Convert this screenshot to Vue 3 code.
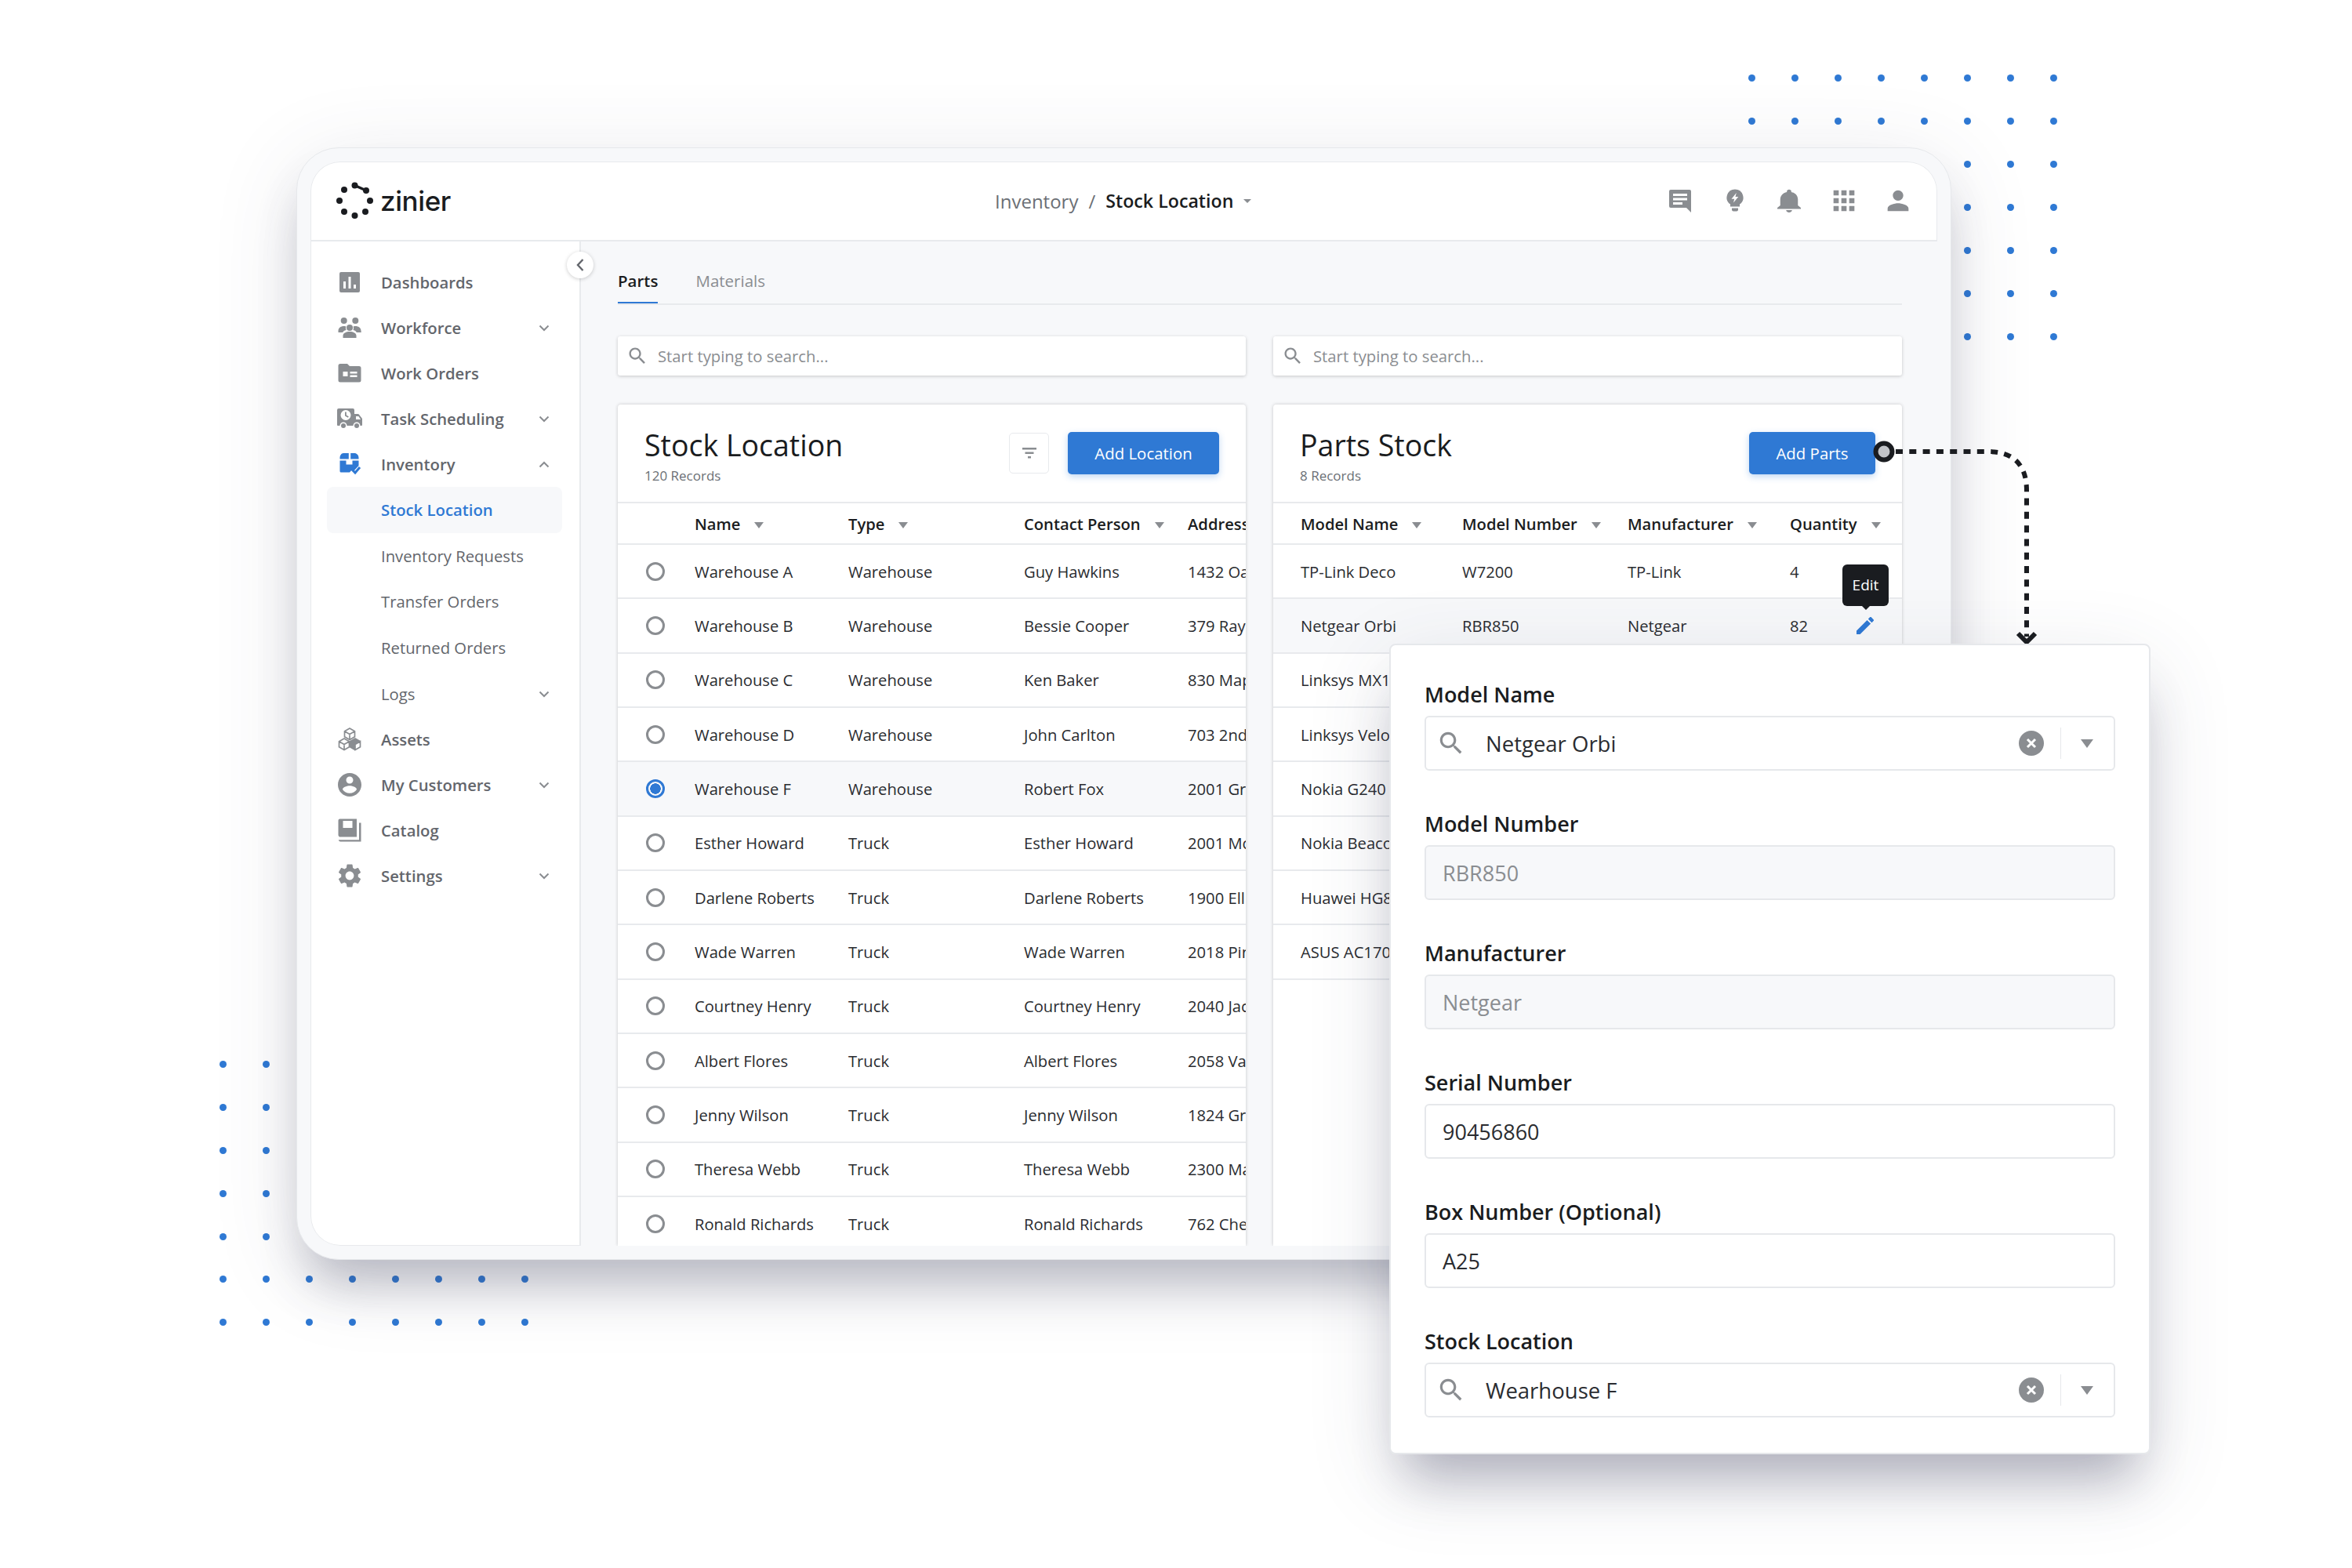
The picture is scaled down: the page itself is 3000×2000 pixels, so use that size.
<script setup>
const dotsTop = [
  ...[99, 154].flatMap(y => [2234, 2289, 2344, 2399, 2454, 2509, 2564, 2619].map(x => ({ x, y }))),
  ...[209, 264, 319, 374, 429].flatMap(y => [2509, 2564, 2619].map(x => ({ x, y })))
]
const dotsBottom = [
  ...[1357, 1412, 1467, 1522, 1577].flatMap(y => [284, 339].map(x => ({ x, y }))),
  ...[1631, 1686].flatMap(y => [284, 339, 394, 449, 504, 559, 614, 669].map(x => ({ x, y })))
]
const logoDots = [
  [452.5, 237.5], [467, 244], [472, 257], [466, 271], [452.5, 276], [439, 271], [433, 257], [439, 243]
]
const menuTop = [
  { key: 'dash', label: 'Dashboards' },
  { key: 'work', label: 'Workforce', chev: 'down' },
  { key: 'orders', label: 'Work Orders' },
  { key: 'task', label: 'Task Scheduling', chev: 'down' },
  { key: 'inv', label: 'Inventory', chev: 'up' }
]
const menuSub = [
  { label: 'Stock Location', active: true },
  { label: 'Inventory Requests' },
  { label: 'Transfer Orders' },
  { label: 'Returned Orders' },
  { label: 'Logs', chev: 'down' }
]
const menuBottom = [
  { key: 'assets', label: 'Assets' },
  { key: 'cust', label: 'My Customers', chev: 'down' },
  { key: 'cat', label: 'Catalog' },
  { key: 'set', label: 'Settings', chev: 'down' }
]
const locations = [
  ['Warehouse A', 'Warehouse', 'Guy Hawkins', '1432 Oa'],
  ['Warehouse B', 'Warehouse', 'Bessie Cooper', '379 Ray'],
  ['Warehouse C', 'Warehouse', 'Ken Baker', '830 Map'],
  ['Warehouse D', 'Warehouse', 'John Carlton', '703 2nd'],
  ['Warehouse F', 'Warehouse', 'Robert Fox', '2001 Gr'],
  ['Esther Howard', 'Truck', 'Esther Howard', '2001 Mc'],
  ['Darlene Roberts', 'Truck', 'Darlene Roberts', '1900 Ell'],
  ['Wade Warren', 'Truck', 'Wade Warren', '2018 Pin'],
  ['Courtney Henry', 'Truck', 'Courtney Henry', '2040 Jac'],
  ['Albert Flores', 'Truck', 'Albert Flores', '2058 Va'],
  ['Jenny Wilson', 'Truck', 'Jenny Wilson', '1824 Gr'],
  ['Theresa Webb', 'Truck', 'Theresa Webb', '2300 Ma'],
  ['Ronald Richards', 'Truck', 'Ronald Richards', '762 Che']
]
const parts = [
  ['TP-Link Deco', 'W7200', 'TP-Link', '4'],
  ['Netgear Orbi', 'RBR850', 'Netgear', '82'],
  ['Linksys MX1'],
  ['Linksys Velo'],
  ['Nokia G240'],
  ['Nokia Beaco'],
  ['Huawei HG8'],
  ['ASUS AC170']
]
const search = 'M15.5 14h-.79l-.28-.27C15.41 12.59 16 11.11 16 9.5 16 5.91 13.09 3 9.5 3S3 5.91 3 9.5 5.91 16 9.5 16c1.61 0 3.09-.59 4.23-1.57l.27.28v.79l5 4.99L20.49 19l-4.99-5zm-6 0C7.01 14 5 11.99 5 9.5S7.01 5 9.5 5 14 7.01 14 9.5 11.99 14 9.5 14z'
</script>

<template>
  <div class="stage">
    <i v-for="d in dotsTop" :key="'t' + d.x + d.y" class="dot" :style="{ left: d.x + 'px', top: d.y + 'px' }"></i>
    <i v-for="d in dotsBottom" :key="'b' + d.x + d.y" class="dot" :style="{ left: d.x + 'px', top: d.y + 'px' }"></i>

    <section class="window">
      <div class="inner">
        <header class="top">
          <div class="logo">
            <svg class="logo-mark" width="52" height="52" viewBox="426 231 52 52">
              <path d="M452.5 237.5L467 244" stroke="#1a1c20" stroke-width="3.5" fill="none" />
              <circle v-for="(p, i) in logoDots" :key="i" :cx="p[0]" :cy="p[1]" r="4" fill="#1a1c20" />
            </svg>
            <span class="logo-text">zinier</span>
          </div>
          <nav class="crumb">
            <span>Inventory</span><span class="slash">/</span><b>Stock Location</b><i class="caret small"></i>
          </nav>
          <div class="tools">
            <svg width="30" height="30" viewBox="0 0 30 30"><path fill-rule="evenodd" d="M3 1h24a2 2 0 0 1 2 2v27l-6-6H3a2 2 0 0 1-2-2V3a2 2 0 0 1 2-2zM6 6v3h18V6zm0 5.500v3h18v-3zm0 5.500v3h12v-3z" /></svg>
            <svg width="30" height="30" viewBox="0 0 30 30"><path fill-rule="evenodd" d="M15 .5A10.500 10.500 0 0 0 9 19.600V22.500h12v-2.900A10.500 10.500 0 0 0 15 .5zM16.800 5L10.500 12.800h3.700L13 17.500l6.300-7.500h-3.800z" /><path d="M11 24.500h8v2a2 2 0 0 1-2 2h-4a2 2 0 0 1-2-2z" /></svg>
            <svg width="30" height="30" viewBox="4 2 16 20" preserveAspectRatio="none"><path d="M12 22c1.100 0 2-.9 2-2h-4c0 1.100.9 2 2 2zm6-6v-5c0-3.070-1.630-5.640-4.500-6.320V4c0-.83-.67-1.500-1.500-1.500s-1.500.67-1.500 1.500v.68C7.640 5.360 6 7.920 6 11v5l-2 2v1h16v-1l-2-2z" /></svg>
            <svg width="30" height="30" viewBox="3 3 18 18"><path d="M4 8h4V4H4v4zm6 12h4v-4h-4v4zm-6 0h4v-4H4v4zm0-6h4v-4H4v4zm6 0h4v-4h-4v4zm6-10v4h4V4h-4zm-6 4h4V4h-4v4zm6 6h4v-4h-4v4zm0 6h4v-4h-4v4z" /></svg>
            <svg width="30" height="30" viewBox="3 3 18 18"><path d="M12 12c2.210 0 4-1.790 4-4s-1.790-4-4-4-4 1.790-4 4 1.790 4 4 4zm0 2c-2.670 0-8 1.340-8 4v2h16v-2c0-2.660-5.330-4-8-4z" /></svg>
          </div>
        </header>

        <div class="body">
          <aside class="side">
            <div v-for="m in menuTop" :key="m.key" class="item">
              <span class="ico">
                <svg v-if="m.key === 'dash'" width="30" height="30" viewBox="0 0 30 30"><path fill-rule="evenodd" d="M4 2h22a2 2 0 0 1 2 2v22a2 2 0 0 1-2 2H4a2 2 0 0 1-2-2V4a2 2 0 0 1 2-2zM7 14v9h3v-9zm6.500-6v15h3V8zM20 18v5h3v-5z" /></svg>
                <svg v-else-if="m.key === 'work'" width="30" height="30" viewBox="0 0 30 30"><circle cx="7.700" cy="6" r="4" /><circle cx="22.300" cy="6" r="4" /><circle cx="15" cy="15" r="4" /><path d="M.5 19c0-4 3.500-6 7-6 1 0 2 .1 2.800.4a7 7 0 0 0 .2 4.600c-2.500.6-4 2-4.300 3H.5zM29.500 19c0-4-3.500-6-7-6-1 0-2 .1-2.800.4a7 7 0 0 1-.2 4.600c2.500.6 4 2 4.300 3h6zM6.500 28v-3c0-3 4-5 8.500-5s8.500 2 8.500 5v3z" /></svg>
                <svg v-else-if="m.key === 'orders'" width="30" height="30" viewBox="0 0 30 30"><path fill-rule="evenodd" d="M3 3h9l3 3h12a2.500 2.500 0 0 1 2.500 2.500V24a2.500 2.500 0 0 1-2.500 2.500H3A2.500 2.500 0 0 1 .5 24V5.500A2.500 2.500 0 0 1 3 3zm3.500 10v6h6v-6zm9 0v2.500h9V13zm0 4.500V20h9v-2.500z" /></svg>
                <svg v-else-if="m.key === 'task'" width="34" height="30" viewBox="0 0 34 30"><path fill-rule="evenodd" d="M3 2h18a2 2 0 0 1 2 2v5h4.500a2 2 0 0 1 1.700.9L33 15v8a1 1 0 0 1-1 1h-1.500a4.500 4.500 0 0 0-9 0h-8a4.500 4.500 0 0 0-9 0H2a1 1 0 0 1-1-1V4a2 2 0 0 1 2-2zM12 4a6.500 6.500 0 1 0 0 13 6.500 6.500 0 0 0 0-13zm13 8v4h6l-2.600-4z" /><path d="M11 6.500h1.800v4l3 1.800-.9 1.400-3.900-2.300z" /><circle cx="9" cy="24" r="3" /><circle cx="26" cy="24" r="3" /></svg>
                <svg v-else width="30" height="30" viewBox="0 0 30 30" class="blue"><path d="M7 1h6.800v7.500H2.500V7c0-3 2-6 4.500-6zM16.200 1H21c3 0 5.500 2.500 5.500 6v1.500H16.200zM2.500 10.500h8v5h8v-5h8V17l-6 6.500-2.500-1.500-3 3.500H4a1.500 1.500 0 0 1-1.500-1.500z" /><path d="M17.500 21.500l4.500 4.500 6-7" fill="none" stroke="#2f79d4" stroke-width="3" /></svg>
              </span>
              <span>{{ m.label }}</span>
              <svg v-if="m.chev" class="chev" :class="{ up: m.chev === 'up' }" width="14" height="9" viewBox="0 0 14 9"><path d="M1.500 1.500L7 7l5.500-5.500" /></svg>
            </div>
            <div v-for="s in menuSub" :key="s.label" class="sub" :class="{ on: s.active }">
              <span>{{ s.label }}</span>
              <svg v-if="s.chev" class="chev" width="14" height="9" viewBox="0 0 14 9"><path d="M1.500 1.500L7 7l5.500-5.500" /></svg>
            </div>
            <div v-for="m in menuBottom" :key="m.key" class="item">
              <span class="ico">
                <svg v-if="m.key === 'assets'" width="30" height="30" viewBox="0 0 30 30"><g class="cube"><path d="M15 1l6.500 3.700v7L15 15.500l-6.500-3.800v-7zM8.500 4.700L15 8.500l6.500-3.800M15 8.500v7" /><path d="M8 14l6.500 3.700v7L8 28.500l-6.500-3.800v-7zM1.500 17.700L8 21.500l6.500-3.800M8 21.500v7" /></g><path class="cubefill" d="M22 14l6.500 3.700v7L22 28.500l-6.500-3.800v-7zM22 21.500v7l6.500-3.800v-7z" fill-rule="evenodd" /><path class="cube" d="M22 21.500l-6.500-3.800" /></svg>
                <svg v-else-if="m.key === 'cust'" width="30" height="30" viewBox="2 2 20 20"><path d="M12 2C6.480 2 2 6.480 2 12s4.480 10 10 10 10-4.480 10-10S17.520 2 12 2zm0 3c1.660 0 3 1.340 3 3s-1.340 3-3 3-3-1.340-3-3 1.340-3 3-3zm0 14.200c-2.500 0-4.710-1.280-6-3.220.03-1.990 4-3.080 6-3.080 1.990 0 5.970 1.090 6 3.080-1.290 1.940-3.500 3.220-6 3.220z" /></svg>
                <svg v-else-if="m.key === 'cat'" width="30" height="30" viewBox="0 0 30 30"><path fill-rule="evenodd" d="M2.500.5H24v23H3.500A2.500 2.500 0 0 1 .5 21V2.500a2 2 0 0 1 2-2zM6.500 3v9h12V3z" /><path d="M27 5.500h2.500V29.500H3A2.500 2.500 0 0 1 .8 27.300H27z" /></svg>
                <svg v-else width="30" height="30" viewBox="2.500 2 19 20"><path d="M19.140 12.940c.04-.3.06-.61.06-.94 0-.32-.02-.64-.07-.94l2.030-1.580c.18-.14.23-.41.12-.61l-1.920-3.320c-.12-.22-.37-.29-.59-.22l-2.390.96c-.5-.38-1.030-.7-1.620-.94l-.36-2.540c-.04-.24-.24-.41-.48-.41h-3.840c-.24 0-.43.17-.47.41l-.36 2.540c-.59.24-1.130.57-1.620.94l-2.390-.96c-.22-.08-.47 0-.59.22L2.740 8.870c-.12.21-.08.47.12.61l2.030 1.580c-.05.3-.09.63-.09.94s.02.64.07.94l-2.030 1.580c-.18.14-.23.41-.12.61l1.920 3.320c.12.22.37.29.59.22l2.390-.96c.5.38 1.030.7 1.620.94l.36 2.540c.05.24.24.41.48.41h3.840c.24 0 .44-.17.47-.41l.36-2.540c.59-.24 1.130-.56 1.620-.94l2.390.96c.22.08.47 0 .59-.22l1.920-3.320c.12-.22.07-.47-.12-.61l-2.010-1.580zM12 15.600c-1.980 0-3.600-1.620-3.600-3.600s1.620-3.600 3.600-3.600 3.600 1.620 3.600 3.600-1.620 3.600-3.600 3.600z" /></svg>
              </span>
              <span>{{ m.label }}</span>
              <svg v-if="m.chev" class="chev" width="14" height="9" viewBox="0 0 14 9"><path d="M1.500 1.500L7 7l5.500-5.500" /></svg>
            </div>
            <button class="collapse"><svg width="12" height="18" viewBox="0 0 12 18"><path d="M9.500 2L3 9l6.500 7" /></svg></button>
          </aside>

          <main class="main">
            <div class="tabs"><span class="tab on">Parts</span><span class="tab">Materials</span></div>
            <div class="two searches">
              <div v-for="n in 2" :key="n" class="searchbox">
                <svg width="28" height="28" viewBox="0 0 24 24"><path :d="search" /></svg>
                <span>Start typing to search...</span>
              </div>
            </div>
            <div class="two cards">
              <div class="card">
                <div class="head">
                  <div><h2>Stock Location</h2><p>120 Records</p></div>
                  <div class="actions">
                    <span class="filter"><svg width="20" height="16" viewBox="0 0 20 16"><path d="M1 1h18v2.500H1zM4.500 6.500h11V9h-11zM8 12h4v2.500H8z" /></svg></span>
                    <button class="btn loc">Add Location</button>
                  </div>
                </div>
                <div class="row thead left">
                  <span></span>
                  <span>Name<i class="caret"></i></span>
                  <span>Type<i class="caret"></i></span>
                  <span>Contact Person<i class="caret"></i></span>
                  <span>Address</span>
                </div>
                <div v-for="(r, i) in locations" :key="r[0]" class="row left" :class="{ hi: i === 4 }">
                  <span class="radio" :class="{ sel: i === 4 }"></span>
                  <span v-for="(c, j) in r" :key="j">{{ c }}</span>
                </div>
              </div>
              <div class="card">
                <div class="head">
                  <div><h2>Parts Stock</h2><p>8 Records</p></div>
                  <div class="actions"><button class="btn parts-btn">Add Parts</button></div>
                </div>
                <div class="row thead right">
                  <span>Model Name<i class="caret"></i></span>
                  <span>Model Number<i class="caret"></i></span>
                  <span>Manufacturer<i class="caret"></i></span>
                  <span>Quantity<i class="caret"></i></span>
                </div>
                <div v-for="(r, i) in parts" :key="r[0]" class="row right" :class="{ hi: i === 1 }">
                  <span v-for="(c, j) in r" :key="j">{{ c }}</span>
                  <span v-if="i === 1" class="edit">
                    <em class="tip">Edit</em>
                    <svg width="22" height="22" viewBox="3 3 18 18"><path d="M3 17.250V21h3.750L17.810 9.940l-3.750-3.750L3 17.250zM20.710 7.040c.39-.39.39-1.020 0-1.410l-2.340-2.340c-.39-.39-1.020-.39-1.410 0l-1.830 1.830 3.750 3.750 1.830-1.830z" /></svg>
                  </span>
                </div>
              </div>
            </div>
          </main>
        </div>
      </div>
    </section>

    <svg class="connector" width="240" height="280" viewBox="2380 560 240 280">
      <circle cx="2403" cy="576" r="10.500" fill="#c2c4c8" stroke="#1a1c20" stroke-width="6" />
      <path d="M2418 576H2535Q2585 576 2585 626V812" fill="none" stroke="#1a1c20" stroke-width="6" stroke-dasharray="9 8.300" />
      <path d="M2574 808L2585 819L2596 808" fill="none" stroke="#1a1c20" stroke-width="6" />
    </svg>

    <section class="modal">
      <div class="field">
        <label>Model Name</label>
        <div class="input">
          <svg class="mag" width="38" height="38" viewBox="0 0 24 24"><path :d="search" /></svg>
          <span class="val">Netgear Orbi</span>
          <span class="clear"><svg width="14" height="14" viewBox="0 0 14 14"><path d="M2 2l10 10M12 2L2 12" /></svg></span>
          <span class="sep"></span>
          <i class="caret big"></i>
        </div>
      </div>
      <div class="field"><label>Model Number</label><div class="input off"><span>RBR850</span></div></div>
      <div class="field"><label>Manufacturer</label><div class="input off"><span>Netgear</span></div></div>
      <div class="field"><label>Serial Number</label><div class="input"><span>90456860</span></div></div>
      <div class="field"><label>Box Number (Optional)</label><div class="input"><span>A25</span></div></div>
      <div class="field">
        <label>Stock Location</label>
        <div class="input">
          <svg class="mag" width="38" height="38" viewBox="0 0 24 24"><path :d="search" /></svg>
          <span class="val">Wearhouse F</span>
          <span class="clear"><svg width="14" height="14" viewBox="0 0 14 14"><path d="M2 2l10 10M12 2L2 12" /></svg></span>
          <span class="sep"></span>
          <i class="caret big"></i>
        </div>
      </div>
    </section>
  </div>
</template>

<style scoped>
.stage {
  position: relative;
  width: 3000px;
  height: 2000px;
  overflow: hidden;
  background: #fff;
  font-family: "Open Sans", "Noto Sans", sans-serif;
  color: #2a2c30;
}
.dot {
  position: absolute;
  width: 9px;
  height: 9px;
  margin: -4.5px 0 0 -4.5px;
  border-radius: 50%;
  background: #2f79d4;
}
.window {
  position: absolute;
  left: 378px;
  top: 188px;
  width: 2111px;
  height: 1419px;
  box-sizing: border-box;
  padding: 17px;
  border: 1px solid #e6e8eb;
  border-radius: 54px;
  background: #f7f8fa;
  box-shadow: 0 44px 60px -14px rgba(60, 62, 90, 0.3), 0 20px 110px rgba(60, 62, 90, 0.13);
}
.inner {
  height: 100%;
  display: flex;
  flex-direction: column;
  border-radius: 38px;
  overflow: hidden;
  background: #fff;
  box-shadow: inset 0 0 0 1px #e8eaed;
}
.top {
  flex: none;
  height: 102px;
  box-sizing: border-box;
  display: flex;
  align-items: center;
  border-bottom: 2px solid #e8eaed;
  position: relative;
}
.logo {
  display: flex;
  align-items: center;
  margin-left: 30px;
  gap: 7px;
}
.logo-text {
  font-family: "Inter", sans-serif;
  font-size: 35px;
  font-weight: 500;
  letter-spacing: -0.4px;
  line-height: 38px;
  color: #1a1c20;
}
.crumb {
  position: absolute;
  left: 873px;
  top: 0;
  height: 100px;
  display: flex;
  align-items: center;
  font-size: 24px;
  color: #6b6f75;
}
.crumb .slash { margin: 0 13px; }
.crumb b { font-size: 23.2px; font-weight: 600; color: #1a1c20; }
.tools {
  margin-left: auto;
  margin-right: 35px;
  display: flex;
  gap: 39.500px;
}
.tools svg { fill: #8a8d91; display: block; }
.body { flex: 1; min-height: 0; display: flex; }
.side {
  position: relative;
  flex: none;
  width: 345px;
  box-sizing: border-box;
  padding: 23px 0 0 21px;
  border-right: 2px solid #e8eaed;
  font-size: 20.3px;
  color: #63666c;
}
.item, .sub {
  position: relative;
  display: flex;
  align-items: center;
  width: 300px;
  box-sizing: border-box;
}
.item { height: 58px; font-weight: 600; }
.sub { height: 58.6px; padding-left: 69px; border-radius: 8px; }
.sub.on { background: #f7f8fa; color: #2f79d4; font-weight: 600; }
.ico {
  flex: none;
  width: 30px;
  height: 30px;
  margin: 0 25px 0 14px;
  display: flex;
  align-items: center;
  justify-content: center;
}
.ico svg { fill: #8a8d91; display: block; flex: none; }
.ico svg.blue { fill: #2f79d4; }
.cube { fill: none; stroke: #8a8d91; stroke-width: 1.700; }
.cubefill { fill: #8a8d91; stroke: #8a8d91; stroke-width: 1.700; }
.chev {
  position: absolute;
  right: 16px;
  top: calc(50% - 4px);
  fill: none;
  stroke: #8a8d91;
  stroke-width: 2;
}
.chev.up { transform: rotate(180deg); }
.collapse {
  position: absolute;
  right: -18px;
  top: 13px;
  width: 34px;
  height: 34px;
  padding: 0;
  border: 0;
  border-radius: 50%;
  background: #fff;
  box-shadow: 0 1px 5px rgba(0, 0, 0, 0.2);
  display: flex;
  align-items: center;
  justify-content: center;
}
.collapse svg { fill: none; stroke: #63666c; stroke-width: 2.400; }
.main {
  flex: 1;
  min-width: 0;
  display: flex;
  flex-direction: column;
  padding: 32px 45px 0 47px;
  background: #f7f8fa;
}
.tabs {
  flex: none;
  height: 47px;
  display: flex;
  gap: 48px;
  border-bottom: 2px solid #e8eaed;
  font-size: 20.5px;
}
.tab { height: 47px; line-height: 36px; color: #8a8d91; box-sizing: border-box; }
.tab.on { color: #1a1c20; font-weight: 600; border-bottom: 2px solid #2f79d4; }
.two {
  display: grid;
  grid-template-columns: 801px 802px;
  gap: 35px;
}
.searches { margin-top: 40px; flex: none; }
.searchbox {
  height: 50px;
  display: flex;
  align-items: center;
  gap: 12px;
  padding-left: 11px;
  border-radius: 3px;
  background: #fff;
  box-shadow: 0 1px 4px rgba(0, 0, 0, 0.2);
  font-size: 20.3px;
  color: #8a8d91;
}
.searchbox svg { fill: #8a8d91; }
.cards { margin-top: 37px; flex: 1; min-height: 0; }
.card {
  min-width: 0;
  overflow: hidden;
  background: #fff;
  border-radius: 4px 4px 0 0;
  box-shadow: 0 0 4px rgba(0, 0, 0, 0.2);
}
.head {
  height: 126px;
  box-sizing: border-box;
  display: flex;
  justify-content: space-between;
  padding: 26px 34px 0;
  border-bottom: 2px solid #e8eaed;
}
h2 {
  margin: 0;
  font-size: 37.5px;
  font-weight: 400;
  line-height: 52px;
  color: #1a1c20;
}
.head p {
  margin: 0;
  font-size: 17px;
  line-height: 26px;
  color: #6b6f75;
}
.actions {
  display: flex;
  gap: 24px;
  align-items: center;
  height: 54px;
  margin-top: 9px;
}
.filter {
  width: 51px;
  height: 52px;
  box-sizing: border-box;
  border: 1px solid #e8eaed;
  border-radius: 5px;
  display: flex;
  align-items: center;
  justify-content: center;
}
.filter svg { fill: #8a8d91; }
.btn {
  height: 54px;
  border: 0;
  border-radius: 5px;
  background: #2f79d4;
  color: #fff;
  font: 400 20.4px "Open Sans", sans-serif;
  box-shadow: 0 3px 8px rgba(47, 121, 212, 0.3);
}
.loc { width: 193px; }
.parts-btn { width: 161px; }
.row {
  display: grid;
  align-items: center;
  height: 69.33px;
  box-sizing: border-box;
  border-bottom: 2px solid #e8eaed;
  font-size: 20.2px;
  white-space: nowrap;
  position: relative;
}
.thead { height: 53px; font-weight: 600; color: #1a1c20; }
.left { grid-template-columns: 98px 196px 224px 209px 74px; }
.right { grid-template-columns: 206px 211px 207px 85px 40px; padding-left: 35px; }
.hi { background: #f7f8fa; }
.radio {
  width: 24px;
  height: 24px;
  box-sizing: border-box;
  margin-left: 36px;
  border: 3px solid #8a8d91;
  border-radius: 50%;
}
.radio.sel {
  border-color: #2f79d4;
  background: radial-gradient(circle, #2f79d4 0 6.500px, transparent 7px);
}
.caret {
  display: inline-block;
  width: 0;
  height: 0;
  margin-left: 18px;
  vertical-align: 2px;
  border-left: 6px solid transparent;
  border-right: 6px solid transparent;
  border-top: 8px solid #8a8d91;
}
.caret.small { margin-left: 13px; border-left-width: 5px; border-right-width: 5px; border-top-width: 5px; }
.caret.big {
  flex: none;
  margin-left: 25px;
  border-left-width: 8px;
  border-right-width: 8px;
  border-top-width: 11px;
}
.edit { position: relative; display: block; width: 22px; height: 22px; }
.edit svg { fill: #2f79d4; display: block; }
.tip {
  position: absolute;
  left: -18px;
  bottom: 36px;
  width: 59px;
  height: 53px;
  border-radius: 6px;
  background: #1a1c20;
  color: #fff;
  font-style: normal;
  font-size: 19px;
  line-height: 53px;
  text-align: center;
}
.tip::after {
  content: "";
  position: absolute;
  left: 24px;
  bottom: -5px;
  border-left: 6px solid transparent;
  border-right: 6px solid transparent;
  border-top: 6px solid #1a1c20;
}
.connector {
  position: absolute;
  left: 2380px;
  top: 560px;
}
.modal {
  position: absolute;
  left: 1772px;
  top: 821px;
  width: 971px;
  height: 1034px;
  box-sizing: border-box;
  padding: 43px 43px 0;
  border: 2px solid #e6e8eb;
  border-radius: 8px;
  background: #fff;
  box-shadow: 0 50px 60px -20px rgba(60, 62, 90, 0.33), 0 30px 110px rgba(60, 62, 90, 0.14);
  display: flex;
  flex-direction: column;
  gap: 48px;
}
.field label {
  display: block;
  height: 40px;
  margin-bottom: 7px;
  font-size: 27px;
  font-weight: 600;
  line-height: 40px;
  color: #1a1c20;
}
.input {
  height: 70px;
  box-sizing: border-box;
  display: flex;
  align-items: center;
  padding: 0 26px 0 21px;
  border: 2px solid #e6e8eb;
  border-radius: 6px;
  font-size: 27px;
  color: #2a2c30;
}
.input.off { background: #f7f8fa; color: #8a8d91; }
.mag { fill: #8a8d91; flex: none; margin: 0 25px 0 -8px; }
.val { flex: 1; font-size: 27.5px; }
.clear {
  flex: none;
  width: 32px;
  height: 32px;
  border-radius: 50%;
  background: #8a8d91;
  display: flex;
  align-items: center;
  justify-content: center;
}
.clear svg { fill: none; stroke: #fff; stroke-width: 3; }
.sep { flex: none; width: 1px; height: 40px; margin-left: 21px; background: #e6e8eb; }
</style>
<style>
html, body { margin: 0; background: #fff; }
</style>
